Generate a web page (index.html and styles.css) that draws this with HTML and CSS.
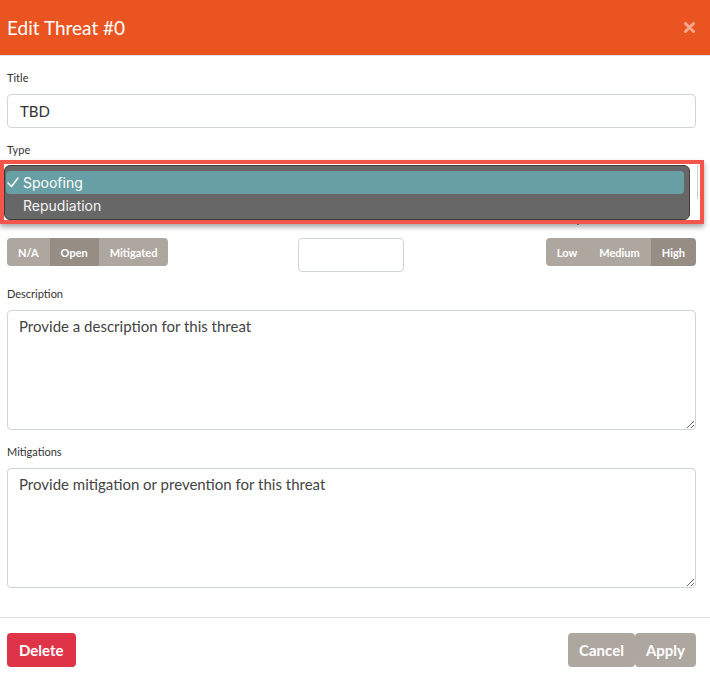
FILE: index.html
```html
<!DOCTYPE html>
<html>
    <head>
        <title>Edit Threat</title>
        <link rel="stylesheet" href="styles.css">
    </head>
    <body>
        <div class="modal">
            <div class="modal_header">
                <h1 class="modal_title">Edit Threat #0</h1>
                <span class="close_btn">
                    <svg width="11" height="11" viewBox="0 0 11 11"><path d="M1.5 1.5 L9.5 9.5 M9.5 1.5 L1.5 9.5" stroke="#f5a98c" stroke-width="3" stroke-linecap="round"/></svg>
                </span>
            </div>
            <div class="modal_body">
                <div class="group">
                    <label class="lbl">Title</label>
                    <input class="field" type="text" value="TBD">
                </div>
                <div class="group type_group">
                    <label class="lbl">Type</label>
                    <select class="field">
                        <option>Spoofing</option>
                        <option>Repudiation</option>
                    </select>
                    <!-- native select popup, highlighted -->
                    <div class="popup">
                        <div class="menu">
                            <div class="opt opt_sel">
                                <svg class="tick" width="12" height="11" viewBox="0 0 12 11"><path d="M1 6 L4.5 9.5 L11 1" fill="none" stroke="#fff" stroke-width="1.4" stroke-linecap="round" stroke-linejoin="round"/></svg>Spoofing
                            </div>
                            <div class="opt">Repudiation</div>
                        </div>
                    </div>
                </div>
                <div class="group status_row">
                    <div class="col col_left">
                        <label class="lbl lbl_row">Status</label>
                        <div class="btn_group">
                            <button type="button" class="gbtn">N/A</button>
                            <button type="button" class="gbtn active">Open</button>
                            <button type="button" class="gbtn">Mitigated</button>
                        </div>
                    </div>
                    <div class="col col_mid">
                        <label class="lbl lbl_row">Score</label>
                        <input class="field score" type="text">
                    </div>
                    <div class="col col_right">
                        <label class="lbl lbl_row">Priority</label>
                        <div class="btn_group">
                            <button type="button" class="gbtn">Low</button>
                            <button type="button" class="gbtn">Medium</button>
                            <button type="button" class="gbtn active">High</button>
                        </div>
                    </div>
                </div>
                <div class="group">
                    <label class="lbl">Description</label>
                    <textarea class="field area" placeholder="Provide a description for this threat"></textarea>
                </div>
                <div class="group">
                    <label class="lbl">Mitigations</label>
                    <textarea class="field area" placeholder="Provide mitigation or prevention for this threat"></textarea>
                </div>
            </div>
            <div class="modal_footer">
                <button type="button" class="btn btn_danger">Delete</button>
                <div class="right_btns">
                    <button type="button" class="btn btn_grey">Cancel</button>
                    <button type="button" class="btn btn_grey">Apply</button>
                </div>
            </div>
        </div>
    </body>
</html>
```

FILE: styles.css
```css
body {
	margin: 0;
	background: #fff;
	font-family: "Lato", "Noto Sans", sans-serif;
	color: #333;
}
.modal_header {
	height: 55px;
	background: #e95420;
	border-bottom: 1px solid #dee2e6;
	display: flex;
	align-items: center;
	justify-content: space-between;
	padding: 0 14px 0 7px;
}
.modal_title {
	margin: 0 0 1px 0;
	font-size: 19px;
	font-weight: 400;
	color: #fff;
}
.close_btn {
	display: flex;
	margin-right: 1px;
}
.modal_body {
	padding: 13px 14px 16px 7px;
}
.group {
	margin-bottom: 13px;
}
.lbl {
	display: block;
	font-size: 11px;
	line-height: 17px;
	margin-bottom: 8px;
	color: #333;
}
.lbl_row {
	line-height: 11px;
	margin-bottom: 14px;
}
.field {
	display: block;
	box-sizing: border-box;
	width: 100%;
	height: 34px;
	padding: 6px 12px;
	font-family: inherit;
	font-size: 15px;
	color: #333;
	background: #fff;
	border: 1px solid #ced4da;
	border-radius: 4px;
}
.area {
	height: 120px;
	resize: vertical;
	padding: 6px 11px;
}
.area::placeholder {
	color: #444;
	opacity: 1;
}
.type_group {
	position: relative;
}
.popup { /* the open select list, framed in red */
	position: absolute;
	top: 19px;
	left: -7px;
	width: 704px;
	height: 64px;
	box-sizing: border-box;
	background: #fff;
	border: 4px solid #f4554a;
	box-shadow: 0 3px 5px rgba(0, 0, 0, 0.35);
}
.popup::after { /* edge of the select behind the list */
	content: "";
	position: absolute;
	top: 1px;
	right: 2px;
	width: 1px;
	height: 34px;
	background: #cfcfcf;
}
.menu {
	position: absolute;
	top: 1px;
	left: 0;
	width: 686px;
	height: 55px;
	box-sizing: border-box;
	padding: 5px 5px 4px 1px;
	background: #676767;
	border: 1px solid #3d3d3d;
	border-radius: 6px;
	font-family: "Inter", "Roboto", sans-serif;
	font-size: 14px;
	color: #f4f4f4;
}
.opt {
	height: 23px;
	line-height: 23px;
	padding-left: 17px;
	border-radius: 4px;
	position: relative;
}
.opt_sel {
	background: #689fa4;
	color: #fff;
}
.tick {
	position: absolute;
	left: 1px;
	top: 6px;
}
.status_row {
	display: grid;
	grid-template-columns: 1fr 1fr 1fr;
	align-items: start;
}
.col_left {
	justify-self: start;
}
.col_mid {
	justify-self: center;
}
.col_right {
	justify-self: end;
}
.score {
	width: 106px;
}
.btn_group {
	display: flex;
	border-radius: 4px;
	overflow: hidden;
}
.gbtn {
	height: 28px;
	border: 0;
	padding: 0 11px;
	background: #aea79f;
	color: #fff;
	font-family: inherit;
	font-size: 11px;
	font-weight: 700;
}
.gbtn.active {
	background: #968d84;
}
.modal_footer {
	border-top: 1px solid #dee2e6;
	display: flex;
	justify-content: space-between;
	padding: 15px 14px 12px 7px;
}
.right_btns {
	display: flex;
}
.btn {
	height: 34px;
	border: 0;
	border-radius: 4px;
	padding: 0 11px;
	color: #fff;
	font-family: inherit;
	font-size: 15px;
	font-weight: 700;
}
.btn_danger {
	background: #df3447;
	padding: 0 12px;
}
.btn_grey {
	background: #aea79f;
}
```
